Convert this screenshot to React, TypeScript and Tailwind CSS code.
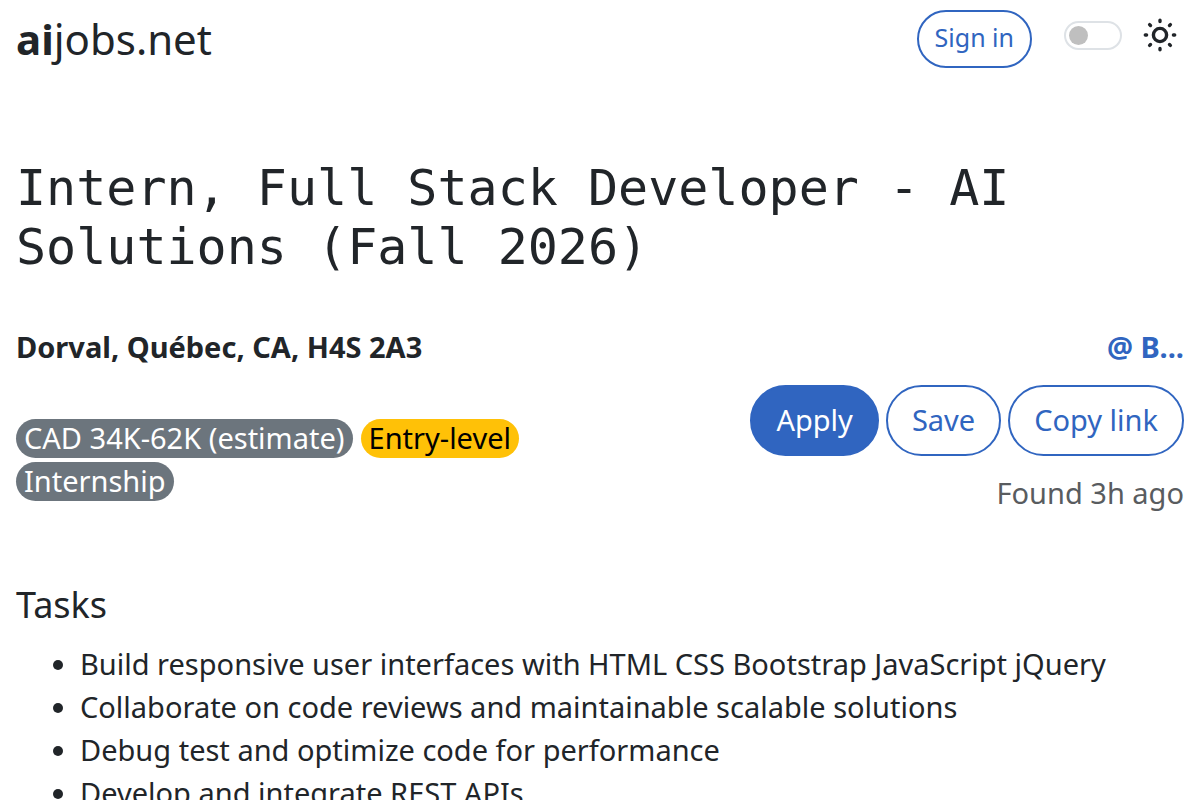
import React from 'react';

interface Badge {
    label: string;
    className: string;
}

const BADGES: Badge[] = [
    { label: 'CAD 34K-62K (estimate)', className: 'bg-[#6c757d] text-white' },
    { label: 'Entry-level', className: 'bg-[#ffc107] text-black' },
    { label: 'Internship', className: 'bg-[#6c757d] text-white' },
];

const TASKS = [
    'Build responsive user interfaces with HTML CSS Bootstrap JavaScript jQuery',
    'Collaborate on code reviews and maintainable scalable solutions',
    'Debug test and optimize code for performance',
    'Develop and integrate REST APIs',
];

const SunIcon: React.FC = () => (
    <svg viewBox="0 0 34 34" className="size-[34px]" fill="none" stroke="currentColor" strokeWidth="3.4" strokeLinecap="round" aria-hidden="true">
        <circle cx="17" cy="17" r="6.6" />
        <path d="M17 2.3v1.3M17 30.4v1.3M2.3 17h1.3M30.4 17h1.3M6.6 6.6l.9.9M26.5 26.5l.9.9M6.6 27.4l.9-.9M26.5 7.5l.9-.9" />
    </svg>
);

const Header: React.FC = () => (
    <header className="flex items-start justify-between px-4 pt-[10px]">
        <a href="#" className="text-[42px] leading-[58px]">
            <b>ai</b>jobs.net
        </a>
        <div className="flex items-start">
            <button className="h-[58px] rounded-full border-2 border-[#3065c0] px-4 pb-1 text-[25px] leading-[50px] text-[#3065c0]">
                Sign in
            </button>
            <label className="ml-8 mr-[7px] mt-2 flex items-center gap-[21px]">
                <input
                    type="checkbox"
                    aria-label="Dark mode"
                    className="flex h-[29px] w-[58px] appearance-none items-center rounded-full border-2 border-[#dee2e6] px-[3px] before:size-[19px] before:rounded-full before:bg-[#bfbfbf] checked:justify-end"
                />
                <SunIcon />
            </label>
        </div>
    </header>
);

export default function App() {
    return (
        <div className="min-h-screen bg-white font-['Noto_Sans',sans-serif] text-[29px] leading-[43px] text-[#212529]">
            <Header />
            <main className="px-4 pt-[91px]">
                <h1 className="font-['DejaVu_Sans_Mono',monospace] text-[50px] leading-[59px]">
                    Intern, Full Stack Developer - AI Solutions (Fall 2026)
                </h1>

                <div className="mt-12 flex justify-between font-bold">
                    <h2>Dorval, Québec, CA, H4S 2A3</h2>
                    <a href="#" className="text-[#3065c0]">@ B...</a>
                </div>

                <div className="mt-[17px] flex justify-between">
                    <ul className="mt-[34px] flex max-w-[576px] flex-1 flex-wrap content-start gap-x-2 gap-y-1">
                        {BADGES.map((badge) => (
                            <li key={badge.label} className={`h-[39px] rounded-full px-2 leading-[38px] ${badge.className}`}>
                                {badge.label}
                            </li>
                        ))}
                    </ul>
                    <div className="text-right">
                        <div className="flex justify-end gap-[7px]">
                            <button className="h-[71px] rounded-full border-2 border-[#3065c0] bg-[#3065c0] px-6 pb-0.5 text-white">Apply</button>
                            <button className="h-[71px] rounded-full border-2 border-[#3065c0] px-6 pb-0.5 text-[#3065c0]">Save</button>
                            <button className="h-[71px] rounded-full border-2 border-[#3065c0] px-6 pb-0.5 text-[#3065c0]">Copy link</button>
                        </div>
                        <p className="mt-[15px] text-[#595c5f]">Found 3h ago</p>
                    </div>
                </div>

                <section className="mt-[69px]">
                    <h2 className="text-[36px]">Tasks</h2>
                    <ul className="mt-4 list-disc pl-16">
                        {TASKS.map((task) => (
                            <li key={task}>{task}</li>
                        ))}
                    </ul>
                </section>
            </main>
        </div>
    );
}
